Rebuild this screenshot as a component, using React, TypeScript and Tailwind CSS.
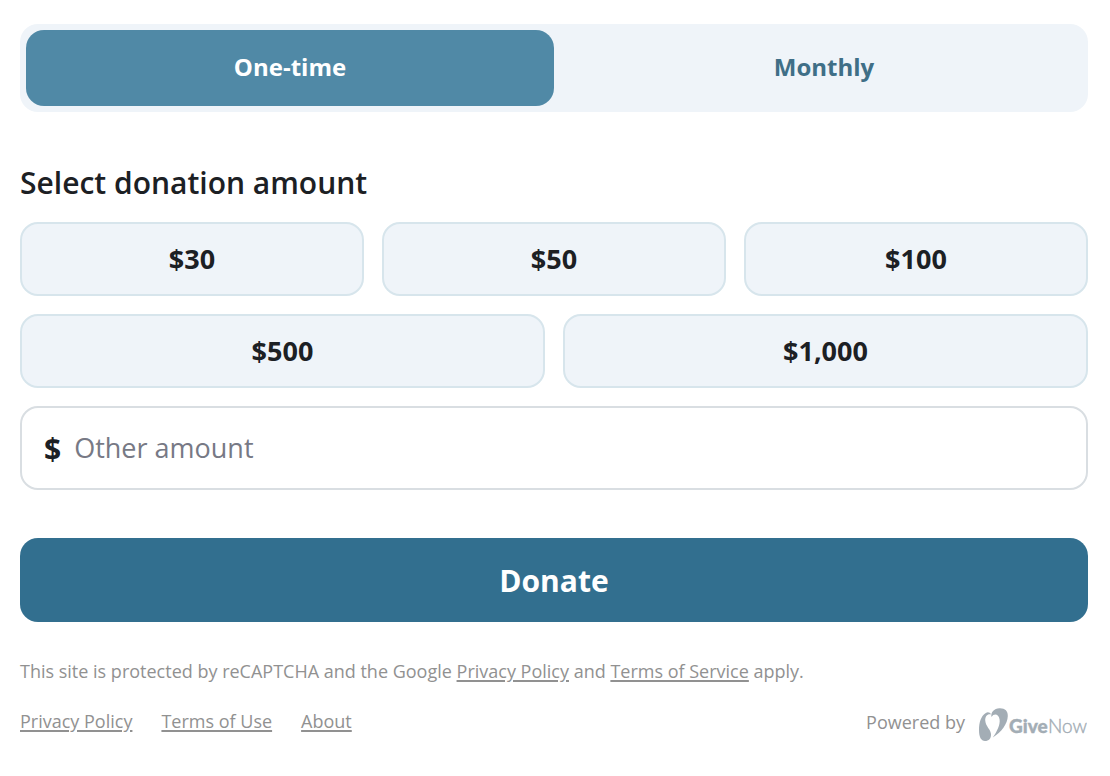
import { useState } from "react";

const frequencies = ["One-time", "Monthly"];

const amounts = [
  { label: "$30", value: "30", span: "col-span-2" },
  { label: "$50", value: "50", span: "col-span-2" },
  { label: "$100", value: "100", span: "col-span-2" },
  { label: "$500", value: "500", span: "col-span-3" },
  { label: "$1,000", value: "1000", span: "col-span-3" },
];

function TextLink({ href, children }: { href: string; children: string }) {
  return (
    <a href={href} className="underline decoration-2 underline-offset-2">
      {children}
    </a>
  );
}

function GiveNowLogo() {
  return (
    <svg viewBox="0 0 108 34" className="h-[34px] w-[108px] text-[#a3adb5]" role="img" aria-label="GiveNow">
      <path
        fill="currentColor"
        d="M12.200 6.500C11 4.500 9 3.700 6.800 5C2 8 0 14.500 0 22C0 29 2 33 6 33C9.800 33 12.300 30.500 12 26C11.700 21.500 6.800 18.500 6.300 13C5.900 8.500 8.500 5.600 12.200 6.500Z"
      />
      <path
        fill="currentColor"
        d="M12.500 9C11.500 4.500 15 0.500 20.500 0.200C26 0 29 3 28.800 8C28.500 16 22.500 24 13.800 29.500C18 23.500 21.300 17 20.600 11.500C19.800 6 15 4.800 12.500 9Z"
      />
      <text x="30" y="25" fill="currentColor" stroke="currentColor" strokeWidth="0.4" className="font-['Lato'] text-[19px] font-black">Give</text>
      <text x="69" y="25" fill="currentColor" stroke="currentColor" strokeWidth="0.4" className="font-['Lato'] text-[19px] font-light">Now</text>
    </svg>
  );
}

export default function App() {
  const [frequency, setFrequency] = useState("One-time");
  const [amount, setAmount] = useState("");

  return (
    <main className="bg-white pt-6 pr-[22px] pb-8 pl-5 font-['Open_Sans','Noto_Sans',sans-serif] text-[#1c2024]">
      <form onSubmit={(event) => event.preventDefault()}>
        <div className="grid grid-cols-2 gap-1.5 rounded-[18px] bg-[#eff4f9] py-1.5 pl-1.5" role="group" aria-label="Donation frequency">
          {frequencies.map((name) => (
            <button
              key={name}
              type="button"
              aria-pressed={frequency === name}
              onClick={() => setFrequency(name)}
              className={
                frequency === name
                  ? "h-[76px] rounded-[18px] bg-[#5089a6] pb-0.5 text-2xl font-bold text-white"
                  : "h-[76px] rounded-[18px] pb-0.5 text-2xl font-bold text-[#3f6f87]"
              }
            >
              {name}
            </button>
          ))}
        </div>

        <h2 className="mt-[50px] text-[30px] leading-[42px] font-semibold">Select donation amount</h2>

        <div className="mt-[18px] grid grid-cols-6 gap-[18px]">
          {amounts.map((item) => (
            <button
              key={item.value}
              type="button"
              onClick={() => setAmount(item.value)}
              className={`${item.span} h-[74px] rounded-[18px] border-2 border-[#d7e5ec] bg-[#eff4f9] text-[27px] font-bold`}
            >
              {item.label}
            </button>
          ))}
        </div>

        <div className="mt-[18px] flex h-[84px] items-center gap-[13px] rounded-[18px] border-2 border-[#d9dee2] px-[22px]">
          <label htmlFor="other-amount" className="text-[30px] font-bold">$</label>
          <input
            id="other-amount"
            type="text"
            inputMode="decimal"
            placeholder="Other amount"
            value={amount}
            onChange={(event) => setAmount(event.target.value)}
            className="min-w-0 flex-1 text-[27px] outline-none placeholder:text-[#777985]"
          />
        </div>

        <button type="submit" className="mt-12 h-[84px] w-full rounded-[18px] bg-[#326f8f] text-[30px] font-bold text-white">
          Donate
        </button>
      </form>

      <footer className="mt-[35px] text-lg leading-7 text-[#919191]">
        <p>
          This site is protected by reCAPTCHA and the Google <TextLink href="#google-privacy">Privacy Policy</TextLink> and{" "}
          <TextLink href="#google-terms">Terms of Service</TextLink> apply.
        </p>
        <div className="mt-[17px] flex flex-wrap items-center justify-between gap-4">
          <nav className="flex gap-[29px] pb-0.5">
            <TextLink href="#privacy">Privacy Policy</TextLink>
            <TextLink href="#terms">Terms of Use</TextLink>
            <TextLink href="#about">About</TextLink>
          </nav>
          <div className="flex items-center gap-3.5 pr-px">
            <span>Powered by</span>
            <span className="pt-1.5">
              <GiveNowLogo />
            </span>
          </div>
        </div>
      </footer>
    </main>
  );
}
